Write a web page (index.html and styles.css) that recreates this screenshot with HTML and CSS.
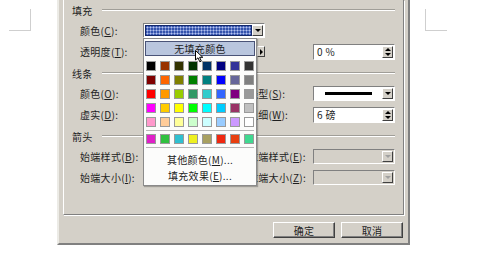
FILE: index.html
```html
<!DOCTYPE html>
<html lang="zh-CN">
<head>
  <meta charset="UTF-8">
  <title>设置自选图形格式</title>
  <link rel="stylesheet" href="styles.css">
</head>
<body>

<div class="mark mark-left"></div>
<div class="mark mark-right"></div>

<div class="dialog">
  <div class="page">

    <div class="section">
      <div class="section-title"><span>填充</span><i class="rule"></i></div>
      <div class="row">
        <span class="label">颜色(<u>C</u>):</span>
        <div class="combo combo-wide">
          <div class="combo-field color-field"></div>
          <div class="drop-btn"><i class="arrow-down"></i></div>
        </div>
      </div>
      <div class="row">
        <span class="label">透明度(<u>T</u>):</span>
        <div class="slider">
          <div class="slider-track"></div>
          <div class="slider-btn"><i class="arrow-right"></i></div>
        </div>
        <div class="spin">
          <span class="spin-value">0 %</span>
          <div class="spin-btn"><i class="arrow-up"></i><i class="arrow-down"></i></div>
        </div>
      </div>
    </div>

    <div class="section">
      <div class="section-title"><span>线条</span><i class="rule"></i></div>
      <div class="row">
        <span class="label">颜色(<u>O</u>):</span>
        <div class="combo combo-short">
          <div class="combo-field"></div>
          <div class="drop-btn"><i class="arrow-down"></i></div>
        </div>
        <span class="label-right">线型(<u>S</u>):</span>
        <div class="combo combo-right">
          <div class="combo-field"><i class="line-sample"></i></div>
          <div class="drop-btn"><i class="arrow-down"></i></div>
        </div>
      </div>
      <div class="row">
        <span class="label">虚实(<u>D</u>):</span>
        <div class="combo combo-short">
          <div class="combo-field"></div>
          <div class="drop-btn"><i class="arrow-down"></i></div>
        </div>
        <span class="label-right">粗细(<u>W</u>):</span>
        <div class="spin">
          <span class="spin-value">6 磅</span>
          <div class="spin-btn"><i class="arrow-up"></i><i class="arrow-down"></i></div>
        </div>
      </div>
    </div>

    <div class="section">
      <div class="section-title"><span>箭头</span><i class="rule"></i></div>
      <div class="row">
        <span class="label">始端样式(<u>B</u>):</span>
        <div class="combo combo-short disabled">
          <div class="combo-field"></div>
          <div class="drop-btn"><i class="arrow-down"></i></div>
        </div>
        <span class="label-right">末端样式(<u>E</u>):</span>
        <div class="combo combo-right disabled">
          <div class="combo-field"></div>
          <div class="drop-btn"><i class="arrow-down"></i></div>
        </div>
      </div>
      <div class="row">
        <span class="label">始端大小(<u>I</u>):</span>
        <div class="combo combo-short disabled">
          <div class="combo-field"></div>
          <div class="drop-btn"><i class="arrow-down"></i></div>
        </div>
        <span class="label-right">末端大小(<u>Z</u>):</span>
        <div class="combo combo-right disabled">
          <div class="combo-field"></div>
          <div class="drop-btn"><i class="arrow-down"></i></div>
        </div>
      </div>
    </div>

  </div>

  <div class="button-bar">
    <button class="btn">确定</button>
    <button class="btn">取消</button>
  </div>
</div>

<!-- colour drop-down, open over the fill colour combo -->
<div class="color-popup">
  <div class="no-fill">无填充颜色</div>
  <div id="palette" class="swatches"></div>
  <div class="popup-sep"></div>
  <div id="recent" class="swatches"></div>
  <div class="popup-sep"></div>
  <div class="popup-item">其他颜色(<u>M</u>)...</div>
  <div class="popup-item">填充效果(<u>E</u>)...</div>
</div>

<svg class="cursor" width="9" height="13" viewBox="0 0 9 13">
  <path d="M0.5 0.5 L0.5 10 L3 7.8 L4.8 11.8 L6.3 11.1 L4.6 7.3 L7.8 7.3 Z" fill="#fff" stroke="#000" stroke-width="1"/>
</svg>

<script>
const palette = [
  '#000000', '#993300', '#333300', '#003300', '#003366', '#000080', '#333399', '#333333',
  '#800000', '#ff6600', '#808000', '#008000', '#008080', '#0000ff', '#666699', '#808080',
  '#ff0000', '#ff9900', '#99cc00', '#339966', '#33cccc', '#3366ff', '#800080', '#999999',
  '#ff00ff', '#ffcc00', '#ffff00', '#00ff00', '#00ffff', '#00ccff', '#993366', '#c0c0c0',
  '#ff99cc', '#ffcc99', '#ffff99', '#ccffcc', '#ccffff', '#99ccff', '#cc99ff', '#ffffff'
];
const recent = ['#e020c8', '#30c040', '#30c0d0', '#eef020', '#a8a060', '#f02810', '#e84010', '#40d890'];

function fillSwatches(id, colors) {
  const box = document.getElementById(id);
  colors.forEach(c => {
    const s = document.createElement('div');
    s.className = 'swatch';
    s.style.background = c;
    box.appendChild(s);
  });
}

fillSwatches('palette', palette);
fillSwatches('recent', recent);
</script>

</body>
</html>
```

FILE: styles.css
```css
* {
  box-sizing: border-box;
}
body {
  margin: 0;
  width: 480px;
  height: 270px;
  overflow: hidden;
  position: relative;
  background: #fff;
  font-family: "Noto Sans CJK SC", "Liberation Sans", sans-serif;
  font-size: 10px;
  letter-spacing: 0.3px;
  color: #1e1e1e;
}
u {
  text-decoration: underline;
}

/* page margin marks */
.mark {
  position: absolute;
  top: 9px;
  width: 22px;
  height: 22px;
  border: 0 solid #cfcfcf;
}
.mark-left {
  left: 9px;
  border-right-width: 1px;
  border-bottom-width: 1px;
}
.mark-right {
  left: 425px;
  border-left-width: 1px;
  border-bottom-width: 1px;
}

.dialog {
  margin-left: 57px;
  width: 353px;
  height: 245px;
  padding: 0 4px;
  background: #d4d0c8;
  border: 2px solid;
  border-top: none;
  border-color: #ecebe6 #808080 #808080 #ecebe6;
}
.page {
  height: 215px;
  padding: 3px 8px 0;
  border-left: 1px solid #fff;
  border-right: 1px solid #808080;
  border-bottom: 1px solid #808080;
  box-shadow: 1px 1px 0 #fff;
}
.section + .section {
  margin-top: 7px;
}
.section-title {
  display: flex;
  align-items: center;
  height: 14px;
}
.rule {
  flex: 1;
  height: 2px;
  margin-left: 9px;
  border-top: 1px solid #a09e98;
  border-bottom: 1px solid #fff;
}
.row {
  display: flex;
  align-items: center;
  height: 15px;
  margin-top: 6px;
  padding-left: 8px;
}
.label {
  width: 63px;
  white-space: nowrap;
}
.label-right {
  width: 65px;
  margin-left: 7px;
  white-space: nowrap;
}

/* combo boxes */
.combo {
  display: flex;
  height: 15px;
  padding: 1px;
  background: #fff;
  border: 1px solid;
  border-color: #808080 #fff #fff #808080;
}
.combo-wide {
  width: 122px;
}
.combo-short {
  width: 98px;
}
.combo-right {
  width: 82px;
}
.combo-field {
  flex: 1;
  display: flex;
  align-items: center;
  padding-left: 10px;
}
.color-field {
  background-color: #3453ad;
  background-image: radial-gradient(circle, #b4c3f0 40%, transparent 55%);
  background-size: 3px 3px;
  border: 1px solid #14286a;
}
.line-sample {
  width: 47px;
  height: 3px;
  background: #000;
}
.drop-btn {
  width: 11px;
  display: flex;
  align-items: center;
  justify-content: center;
  background: #d4d0c8;
  border: 1px solid;
  border-color: #fff #404040 #404040 #fff;
}
.disabled,
.disabled .combo-field {
  background: #d4d0c8;
}
.disabled .arrow-down {
  border-top-color: #a0a0a0;
}

.arrow-down,
.arrow-up {
  display: block;
  width: 0;
  height: 0;
  border-left: 3px solid transparent;
  border-right: 3px solid transparent;
}
.arrow-down {
  border-top: 3px solid #000;
}
.arrow-up {
  border-bottom: 3px solid #000;
}
.arrow-right {
  display: block;
  width: 0;
  height: 0;
  border-top: 3px solid transparent;
  border-bottom: 3px solid transparent;
  border-left: 3px solid #000;
}

/* transparency slider */
.slider {
  width: 122px;
  height: 11px;
  display: flex;
  align-items: center;
}
.slider-track {
  flex: 1;
  height: 4px;
  border: 1px solid;
  border-color: #808080 #fff #fff #808080;
}
.slider-btn {
  width: 8px;
  height: 11px;
  display: flex;
  align-items: center;
  justify-content: center;
  background: #d4d0c8;
  border: 1px solid;
  border-color: #fff #404040 #404040 #fff;
}

/* spin boxes */
.spin {
  display: flex;
  width: 82px;
  height: 16px;
  margin-left: auto;
  padding: 1px;
  background: #fff;
  border: 1px solid;
  border-color: #808080 #fff #fff #808080;
}
.spin-value {
  flex: 1;
  padding-left: 2px;
  line-height: 12px;
}
.spin-btn {
  width: 11px;
  display: flex;
  flex-direction: column;
  align-items: center;
  justify-content: center;
  gap: 2px;
  background: #d4d0c8;
  border: 1px solid;
  border-color: #fff #404040 #404040 #fff;
}

.button-bar {
  display: flex;
  justify-content: flex-end;
  gap: 6px;
  margin-top: 7px;
  padding-right: 1px;
}
.btn {
  width: 62px;
  height: 16px;
  padding: 0;
  font-family: inherit;
  font-size: 10px;
  letter-spacing: 0.3px;
  color: #1e1e1e;
  background: #d4d0c8;
  border: 1px solid;
  border-color: #fff #404040 #404040 #fff;
  box-shadow: inset -1px -1px 0 #808080;
}

/* colour popup */
.color-popup {
  position: absolute;
  left: 143px;
  top: 38px;
  width: 114px;
  padding: 2px 1px 1px;
  background: #fcfcfb;
  border: 1px solid #8a8a8a;
  box-shadow: 1px 1px 1px rgba(0, 0, 0, 0.25);
}
.no-fill {
  height: 15px;
  line-height: 13px;
  text-align: center;
  background: #b9c6de;
  border: 1px solid #4a5478;
}
.swatches {
  display: grid;
  grid-template-columns: repeat(8, 10px);
  gap: 4px;
  justify-content: center;
  margin-top: 5px;
}
#recent {
  margin-top: 3px;
}
.swatch {
  width: 10px;
  height: 10px;
  border: 1px solid #9a9a9a;
}
.popup-sep {
  height: 1px;
  margin: 3px 1px 0;
  background: #b8b8b8;
}
.popup-item {
  height: 16px;
  line-height: 16px;
  text-align: center;
}
.popup-sep + .popup-item {
  margin-top: 4px;
}

.cursor {
  position: absolute;
  left: 195px;
  top: 50px;
}
```
